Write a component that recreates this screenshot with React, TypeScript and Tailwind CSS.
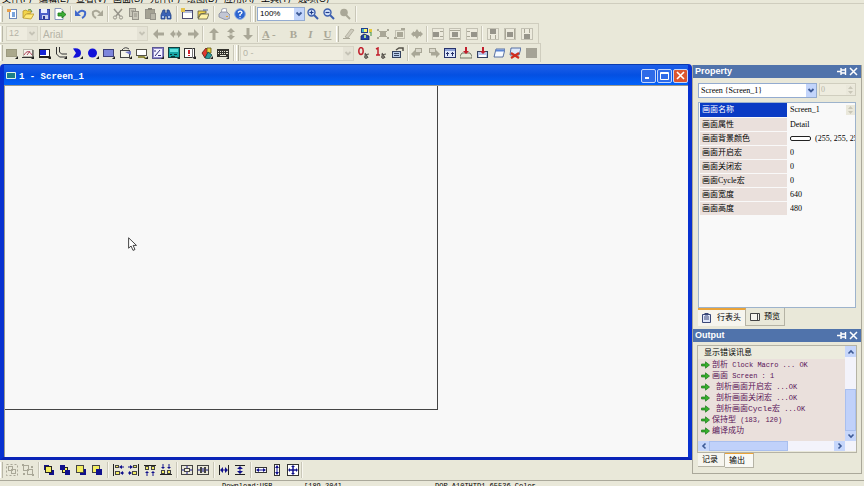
import type { ReactNode } from "react"
import clsx from "clsx"

type Tool = [string, ReactNode]

const GRAY = "#a9a797"
const NAVY = "#10108c"

const box = (x: number, y: number, w: number, h: number, fill: string, stroke?: string) => (
  <rect x={stroke ? x + 0.5 : x} y={stroke ? y + 0.5 : y} width={stroke ? w - 1 : w} height={stroke ? h - 1 : h} fill={fill} stroke={stroke} />
)
const line = (d: string, stroke = "#222", width = 1) => <path d={d} fill="none" stroke={stroke} strokeWidth={width} />
const fill = (d: string, color: string, stroke?: string) => <path d={d} fill={color} stroke={stroke} strokeWidth={0.8} />
// small mark in the corner of tools that open a flyout
const corner = fill("M12 9v3H9z", "#222")

const fileTools: Tool[] = [
  ["New", <>{box(3, 1, 8, 10, "#fff", "#7089b8")}{box(6, 4, 3, 5, "#7aa5dc")}{fill("M1 1h4v3H1z", "#e8a04a")}</>],
  ["Open", <>{fill("M1 10V3l3-1 1 1h4v2l-4 1z", "#f2d44c", "#b8952a")}{fill("M1 10l3-4h8l-3 5z", "#ffe978", "#b8952a")}{line("M6 2q3-2 4 2", "#4b8c3a")}</>],
  ["Save", <>{box(1, 1, 11, 11, "#4c5fc8", "#3240a0")}{box(3, 1, 6, 4, "#e8edff")}{box(4, 7, 6, 4, "#c9d0f0")}{box(5, 8, 2, 3, "#2a3590")}</>],
  ["Import", <>{fill("M1 .5h6l2 2v9H1z", "#fff", "#6f7fae")}{fill("M4 5h4V3l4 3.5L8 10V8H4z", "#3bad35", "#1c7a1a")}</>],
]
const undoTools: Tool[] = [
  ["Undo", <>{line("M3 5q4-4 7-1 1 4-3 6", "#4169cc", 2)}{fill("M0 2v6h6z", "#4169cc")}</>],
  ["Redo", <>{line("M9 5Q5 1 2 4q-1 4 3 6", GRAY, 2)}{fill("M12 2v6H6z", GRAY)}</>],
]
const editTools: Tool[] = [
  ["Cut", <>{line("M2 1l6 7M10 1L4 8", "#96948a", 1.5)}<circle cx="3" cy="9.5" r="1.6" fill="none" stroke="#96948a" /><circle cx="9" cy="9.5" r="1.6" fill="none" stroke="#96948a" /></>],
  ["Copy", <>{box(1, 0, 7, 9, "#c9c7ba", "#96948a")}{box(4, 3, 7, 9, "#c9c7ba", "#96948a")}{line("M6 6h3M6 8h3M3 3h3", "#96948a")}</>],
  ["Paste", <>{box(1, 1, 10, 10, "#a4a294", "#96948a")}{box(4, 0, 4, 2, "#85837a")}{box(6, 5, 6, 7, "#b9b7aa", "#96948a")}</>],
  ["Find", <>{fill("M3 2h2v3h2V2h2l2 5v4H7V8H5v3H1V7z", "#3b63b5", "#274688")}{box(2, 8, 2, 2, "#a9c3f0")}{box(8, 8, 2, 2, "#a9c3f0")}</>],
]
const screenTools: Tool[] = [
  ["New screen", <>{box(1, 2, 11, 9, "#fff", "#4c4a70")}{box(2, 3, 9, 2, "#b5bedc")}{fill("M0 0h4v4H0z", "#e4c24e")}</>],
  ["Open screen", <>{fill("M1 10V3h8v2L3 6z", "#f2d44c", "#5d5940")}{fill("M1 11l3-5h8l-2 5z", "#fff3a8", "#5d5940")}{line("M6 2h5", "#4b62a8")}</>],
]
const printTools: Tool[] = [
  ["Print", <>{fill("M3 5l1-4 4-1 1 5z", "#fff", "#8f93a5")}{fill("M1 6l2-2h6l3 3v3l-4 2-7-3z", "#c2c6d4", "#82879a")}{box(8, 8, 2, 1, "#e5a52e")}</>],
  ["Help", <><circle cx="6" cy="6" r="5.3" fill="#2d65cf" stroke="#86a8e4" />{line("M4 4.5Q6 2 8 4.200 8 5.500 6 6.500V8", "#fff", 1.3)}{box(5.5, 9, 1, 1, "#fff")}</>],
]
const lens = (color: string) => <>{line("M7 7l4 4", color, 2)}<circle cx="4.5" cy="4.5" r="3.5" fill="#d4e3fb" stroke={color} strokeWidth="1.4" /></>
const zoomTools: Tool[] = [
  ["Zoom in", <>{lens("#3c5eae")}{line("M2.500 4.500h4M4.500 2.500v4", "#203d8a", 1.2)}</>],
  ["Zoom out", <>{lens("#3c5eae")}{line("M2.500 4.500h4", "#203d8a", 1.2)}</>],
  ["Zoom", <><circle cx="5" cy="4.5" r="3.8" fill={GRAY} />{line("M7 7l4 4", GRAY, 2)}</>],
]

const left = fill("M0 6l5-5v3.500h6v3H5V11z", GRAY)
const right = fill("M12 6L7 1v3.500H1v3h6V11z", GRAY)
const hArrowTools: Tool[] = [
  ["Move left", left],
  ["Spread", <>{fill("M0 6l4-4v2.500h1.500v3H4V10z", GRAY)}{fill("M12 6L8 2v2.500H6.500v3H8V10z", GRAY)}</>],
  ["Move right", right],
]
const vArrowTools: Tool[] = [
  ["Move up", fill("M6 0l5 5H7.500v7h-3V5H1z", GRAY)],
  ["Stretch", <>{fill("M6 0l4 4H7.500v1.500h-3V4H2z", GRAY)}{fill("M6 12l4-4H7.500V6.500h-3V8H2z", GRAY)}</>],
  ["Move down", fill("M6 12l5-5H7.500V0h-3v7H1z", GRAY)],
]
const handles = <>{box(0, 1, 2, 2, GRAY)}{box(10, 1, 2, 2, GRAY)}{box(0, 9, 2, 2, GRAY)}{box(10, 9, 2, 2, GRAY)}</>
const drawTools: Tool[] = [
  ["Line color", <>{fill("M2 9l6-8 3 1-6 8z", "#cfcdbf", GRAY)}{line("M0 10.500h7", GRAY)}</>],
  ["Transform", <>{box(1, 0, 7, 5, "#49b8c4", "#1f3f90")}{box(4, 1, 3, 3, "#fff36a")}{fill("M1 12V8l3-2 5 2v4z", "#2343a5", "#15245c")}{box(4, 7, 2, 3, "#a8d890")}{line("M9 4h2v4", "#3d8d3c")}{box(9, 1, 3, 3, "#e4c83e")}</>],
  ["Fit", <>{box(3, 3, 6, 6, GRAY)}{handles}{line("M1 2l2 2M11 2L9 4M1 10l2-2M11 10L9 8", GRAY)}</>],
  ["Resize", <>{box(3, 4, 6, 5, GRAY)}{box(1, 2, 10, 9, "none", "#c3c1b3")}{box(7, 0, 4, 2, GRAY)}{box(0, 9, 3, 2, GRAY)}</>],
  ["Center", <>{box(3, 4, 6, 4, GRAY)}{fill("M0 6l3-3v6zM12 6L9 3v6zM6 1l2 3H4zM6 11l2-3H4z", GRAY)}</>],
]
const slot = (x: number, y: number) => <>{box(0, 0, 12, 12, "#eceadd", "#c3c1b3")}{box(x, y, 6, 5, "#96948a")}</>
const alignTools: Tool[] = [
  ["Snap left", <>{slot(1, 4)}{line("M8 3.500h3M8 8.500h3", GRAY)}</>],
  ["Snap center", <>{slot(3, 4)}{line("M1 2.500h10M1 10.500h10", GRAY)}</>],
  ["Snap right", <>{slot(5, 4)}{line("M1 3.500h3M1 8.500h3", GRAY)}</>],
]
const valignTools: Tool[] = [
  ["Snap top", <>{slot(3, 1)}{line("M3.500 7v4M8.500 7v4", GRAY)}</>],
  ["Snap middle", <>{slot(3, 4)}{line("M1.500 1v10M10.500 1v10", GRAY)}</>],
  ["Snap bottom", <>{slot(3, 6)}{line("M3.500 1v4M8.500 1v4", GRAY)}</>],
]

const elementTools: Tool[] = [
  ["Button", <>{box(0, 2, 11, 8, "#aaa88c", "#9c9a80")}{corner}</>],
  ["Meter", <>{box(1, 2, 10, 8, "#f5f3ee", "#b9b7aa")}{line("M2 8q4-7 8 0M5 8l3-4", "#b04a5c")}{line("M0 10.500h11V3", "#333")}{corner}</>],
  ["Bar", <>{box(0, 2, 11, 8, "#fff", "#222")}{box(1, 3, 6, 5, "#1626d8")}{line("M0 10.500h11", "#222")}{corner}</>],
  ["Pipe", <>{line("M1.500 0v7l3 3H12M4.500 0v5l2 2H12", "#333")}{corner}</>],
  ["Pie", <>{fill("M2 1.500q8-1 8 4.500t-8 4.500l3-4.500z", "#1212d8")}{corner}</>],
  ["Circle", <><circle cx="5.5" cy="6" r="4.5" fill="#1212d8" />{corner}</>],
  ["Rectangle", <>{box(0, 2, 11, 8, "#7d86dc", "#3c3f78")}{corner}</>],
  ["Input", <>{box(0, 3, 10, 8, "#f6f6ea", "#444")}{line("M2 3q3-4 7-1", "#444")}{fill("M5 5l6-1v4z", "#7076c8")}{corner}</>],
  ["Curve", <>{box(0, 2, 11, 7, "#fff", "#55534a")}{line("M2 10h6l2 2", "#777214", 1.5)}{corner}</>],
  ["Sampling", <>{box(0, 0, 12, 12, "#f4f2ff", "#5b5794")}{box(1, 1, 10, 10, "none", "#8d86c9")}{line("M3 9l5-6M3 3v2M6 8.500h3", "#302b74")}{corner}</>],
  ["Alarm", <>{box(0, 0, 12, 11, "#16a3a3", "#143e3e")}{box(2, 2, 8, 3, "#5fe0dc")}{line("M2 7.500h2M6 7.500h3M3 9.500h4", "#083838")}{corner}</>],
  ["Message", <>{box(0, 1, 11, 10, "#fff", "#333")}{line("M8.500 1v10", "#777")}{box(4, 3, 2, 4, "#d1202c")}{box(4, 8, 2, 1, "#d1202c")}{corner}</>],
  ["Graphics", <>{fill("M1 6l4-5 3 3-4 7z", "#e0382f", "#5c1a12")}{fill("M6 1h4v5H6z", "#e9d43f", "#5f5610")}{fill("M4 11l3-6 4 3-3 4z", "#2b9b9b", "#144")}{corner}</>],
  ["Keypad", <>{box(0, 2, 12, 8, "#33322d")}{line("M1 4.500h10M1 6.500h10", "#e7e5d6", 1)}{line("M2.500 3v5M4.500 3v5M6.500 3v5M8.500 3v5", "#33322d")}{line("M3 8.500h6", "#e7e5d6")}{corner}</>],
]
const key = <>{line("M6 8l5-1M7 6l3 5", "#5a564f", 1.2)}<circle cx="8" cy="10" r="1.4" fill="#8d8980" stroke="#5a564f" /></>
const stateTools: Tool[] = [
  ["State 0", <><ellipse cx="3" cy="4" rx="2.2" ry="3.4" fill="none" stroke="#c11f2c" strokeWidth="1.5" />{key}</>],
  ["State 1", <>{line("M1 2l2-1v7M1 8h4", "#c11f2c", 1.5)}{key}</>],
  ["All states", <>{box(0, 4, 9, 7, "#b9cdea", "#34425f")}{line("M2 6.500h5M2 8.500h5", "#34425f")}{line("M4 3l3-2h4v3", "#55524a", 1.5)}</>],
]
const buildTools: Tool[] = [
  ["Previous", <>{box(4, 1, 7, 5, "#dad8cb", GRAY)}{fill("M0 7l4-4v2.500h5v3H4V11z", GRAY)}</>],
  ["Next", <>{box(1, 1, 7, 5, "#dad8cb", GRAY)}{fill("M12 7L8 3v2.500H3v3h5V11z", GRAY)}</>],
  ["Compile", <>{box(0, 1, 12, 10, "#dfe8fa", "#27336c")}{box(1, 2, 10, 2, "#8fa3d8")}{line("M3.500 5v4M8.500 5v4M2 6.500h3M7 6.500h3", "#27336c")}</>],
  ["Download all", <>{fill("M0 9l2-3h8l2 3v2H0z", "#e6ebd8", "#555c4a")}{fill("M5 0h2v4h2L6 7 3 4h2z", "#c11f2c")}</>],
  ["Download", <>{box(0, 4, 11, 7, "#b8c8ea", "#34425f")}{box(2, 8, 7, 2, "#fff")}{fill("M5 0h2v4h2L6 7 3 4h2z", "#c11f2c")}</>],
  ["Simulate online", <>{fill("M1 10l2-8h9l-2 8z", "#f6faff", "#33518f")}{line("M3 3.500h8", "#5c86d4", 2)}</>],
  ["Simulate offline", <>{fill("M1 8l1-7h10l-2 7z", "#dce8fa", "#33518f")}{line("M2 6l8 5M10 6l-8 5", "#cf2d20", 2.2)}</>],
  ["Stop", box(0, 1, 11, 10, "#a5a396")],
]

const groupTools: Tool[] = [
  ["Group", <>{box(2, 2, 5, 5, "none", GRAY)}{box(5, 5, 5, 5, "none", GRAY)}<rect x=".5" y=".5" width="11" height="11" fill="none" stroke={GRAY} strokeDasharray="2 2" /></>],
  ["Ungroup", <>{box(1, 1, 6, 6, "none", GRAY)}{box(5, 5, 6, 6, "none", GRAY)}{box(0, 0, 2, 2, GRAY)}{box(10, 10, 2, 2, GRAY)}{box(9, 2, 2, 2, GRAY)}{box(1, 9, 2, 2, GRAY)}</>],
]
const orderTools: Tool[] = [
  ["Bring to front", <>{box(1, 1, 5, 5, NAVY)}{box(6, 6, 5, 5, NAVY)}{box(2, 2, 7, 7, "#f4ee62", "#222")}</>],
  ["Send to back", <>{box(3, 3, 6, 6, "#f4ee62", "#222")}{box(1, 1, 5, 5, NAVY)}{box(6, 6, 5, 5, NAVY)}</>],
  ["Bring forward", <>{box(5, 5, 6, 6, NAVY)}{box(1, 1, 8, 8, "#f4ee62", "#444")}</>],
  ["Send backward", <>{box(1, 1, 8, 8, "#f4ee62", "#444")}{box(5, 5, 6, 6, NAVY)}</>],
]
const edgeH = (
  <>{line("M1.500 0v12", "#222")}{box(3, 1, 4, 3, "#f4ee62", "#444")}{box(3, 7, 5, 4, "#f4ee62", "#444")}{fill("M7 3l3-2v4zM8 9l3-2v4z", NAVY)}{line("M9 3h3M10 9h2", NAVY)}</>
)
const edgeV = (
  <>{line("M0 1.500h12", "#222")}{box(1, 2, 4, 4, "#f4ee62", "#444")}{box(7, 2, 4, 4, "#f4ee62", "#444")}{fill("M3 7l2 2H1zM9 7l2 2H7z", NAVY)}{line("M3 8v4M9 8v4", NAVY)}</>
)
const edgeTools: Tool[] = [
  ["Align left", edgeH],
  ["Align right", <g transform="translate(12 0) scale(-1 1)">{edgeH}</g>],
  ["Align top", edgeV],
  ["Align bottom", <g transform="translate(0 12) scale(1 -1)">{edgeV}</g>],
]
const centerTools: Tool[] = [
  ["Center vertically", <>{box(0, 1, 12, 10, "none", "#444")}{line("M6 2v8M1 6h3M8 6h3", NAVY)}{box(3, 4, 6, 4, "#f1efdf", "#444")}</>],
  ["Center horizontally", <>{box(0, 1, 12, 10, "none", "#444")}{line("M1 6h2M9 6h2M6 4v4", NAVY)}{box(3, 3, 2, 6, "#f1efdf", "#444")}{box(7, 3, 2, 6, "#f1efdf", "#444")}</>],
]
const spaceH = <>{line("M1.500 1v10M10.500 1v10", "#222")}{line("M3 6h6", NAVY)}{fill("M2 6l3-3v6zM10 6L7 3v6z", NAVY)}</>
const spaceTools: Tool[] = [
  ["Space across", spaceH],
  ["Space down", <g transform="rotate(90 6 6)">{spaceH}</g>],
]
const sizeH = <>{box(0, 3, 12, 6, "#fff", "#333")}{line("M3 6h6", NAVY)}{fill("M1 6l3-2v4zM11 6L8 4v4z", NAVY)}</>
const sizeTools: Tool[] = [
  ["Same width", sizeH],
  ["Same height", <g transform="rotate(90 6 6)">{sizeH}</g>],
  ["Same size", <>{box(0, 0, 12, 12, "#fff", "#333")}{line("M3 6h6M6 3v6", NAVY, 1.5)}{fill("M1 6l2-2v4zM11 6L9 4v4zM6 1l2 2H4zM6 11l2-2H4z", NAVY)}</>],
]

const menus = ["文件(F)", "编辑(E)", "查看(V)", "画面(S)", "元件(P)", "绘图(D)", "应用(A)", "工具(T)", "选项(O)"]

const properties = [
  ["画面名称", "Screen_1"],
  ["画面属性", "Detail"],
  ["画面背景颜色", "(255, 255, 255)"],
  ["画面开启宏", "0"],
  ["画面关闭宏", "0"],
  ["画面Cycle宏", "0"],
  ["画面宽度", "640"],
  ["画面高度", "480"],
]

// indent, message, trailing text
const messages: [boolean, string, string][] = [
  [false, "剖析", " Clock Macro ... OK"],
  [false, "画面", " Screen : 1"],
  [true, "剖析画面开启宏", " ...OK"],
  [true, "剖析画面关闭宏", " ...OK"],
  [true, "剖析画面Cycle宏", " ...OK"],
  [false, "保持型", " (183, 120)"],
  [false, "编译成功", ""],
]

const serif = "font-['Liberation_Serif','Noto_Sans_CJK_SC',serif]"
const mono = "font-['Liberation_Mono','Noto_Sans_CJK_SC',monospace]"

function Tools({ items, className = "auto-cols-[16px]" }: { items: Tool[]; className?: string }) {
  return (
    <div className={clsx("grid h-full grid-flow-col items-center", className)}>
      {items.map(([label, icon]) => (
        <button key={label} aria-label={label} className="flex h-4 items-center justify-center">
          <svg viewBox="0 0 12 12" className="h-3 w-3">{icon}</svg>
        </button>
      ))}
    </div>
  )
}

function Sep({ className = "mx-0.5" }: { className?: string }) {
  return <div className={clsx("h-4 w-px shrink-0 bg-[#c9c7b8] shadow-[1px_0_#f8f7ef]", className)} />
}

function Grip() {
  return <div className="mr-px h-4 w-[3px] shrink-0 border-x border-l-white border-r-[#b9b7a8]" />
}

function Combo({ label, value, className, disabled = false }: { label: string; value: string; className: string; disabled?: boolean }) {
  return (
    <div className={clsx("relative shrink-0", className)}>
      <select
        aria-label={label}
        disabled={disabled}
        className={clsx(
          "block h-full w-full appearance-none border pl-0.5 opacity-100",
          disabled ? "border-[#d6d4c5] bg-[#eeecdf] text-[#b5b3a6]" : "border-[#93abd0] bg-white text-black"
        )}
      >
        <option>{value}</option>
      </select>
      <svg
        viewBox="0 0 10 12"
        className={clsx("pointer-events-none absolute inset-y-px right-px h-[calc(100%-2px)] w-[10px]", disabled ? "bg-[#e5e3d6]" : "bg-[#c3d5fb]")}
      >
        <path d="M2.500 4.500L5 7l2.500-2.500" fill="none" stroke={disabled ? "#c5c3b6" : "#3d5a96"} strokeWidth="1.8" />
      </svg>
    </div>
  )
}

function PanelHeader({ title }: { title: string }) {
  return (
    <div className="flex h-[13px] shrink-0 items-center bg-[#5073ab] pl-0.5 text-white">
      <h2 className="flex-1 text-[9px] leading-[13px] font-bold">{title}</h2>
      <button aria-label={`Pin ${title}`} className="mr-px">
        <svg viewBox="0 0 11 11" className="h-[11px] w-[11px]">
          <path d="M1 5.500h4M5 2v7M5 4h5M5 7h5M9.500 2v7" fill="none" stroke="#fff" strokeWidth="1.4" />
        </svg>
      </button>
      <button aria-label={`Close ${title}`} className="mr-0.5">
        <svg viewBox="0 0 11 11" className="h-[11px] w-[11px]">
          <path d="M2 2l7 7M9 2L2 9" stroke="#fff" strokeWidth="1.5" />
        </svg>
      </button>
    </div>
  )
}

function Toolbars() {
  return (
    <header className="shrink-0 pb-0.5">
      <nav className="flex h-[3px] items-end overflow-hidden pl-0.5">
        {menus.map((m) => (
          <button key={m} className="w-[37px] shrink-0 text-left text-[9px] leading-[8px]">{m}</button>
        ))}
      </nav>
      <div className="flex h-5 items-center border-t border-[#cfcdbe]">
        <Grip />
        <Tools items={fileTools} />
        <Sep />
        <Tools items={undoTools} />
        <Sep />
        <Tools items={editTools} />
        <Sep />
        <Tools items={screenTools} />
        <Sep />
        <Tools items={printTools} />
        <Sep />
        <Grip />
        <Combo label="Zoom level" value="100%" className="h-[14px] w-[48px] text-[8px]" />
        <Tools items={zoomTools} />
        <Sep />
      </div>
      <div className="flex h-5 w-[539px] items-center border-t border-r border-[#cfcdbe]">
        <Grip />
        <Combo label="Font size" value="12" disabled className="ml-0.5 h-[15px] w-8 text-[9px]" />
        <Combo label="Font" value="Arial" disabled className="mx-0.5 h-[15px] w-[108px] text-[10px]" />
        <Tools items={hArrowTools} className="auto-cols-[17px]" />
        <Sep className="mr-0.5 ml-px" />
        <Tools items={vArrowTools} className="auto-cols-[17px]" />
        <Sep className="mr-0.5 ml-px" />
        <div className={clsx("flex text-[11px] leading-4 font-bold text-[#a9a797]", serif)}>
          <button className="w-[25px] pl-0.5 text-left"><u>A</u> -</button>
          <button className="w-[17px]">B</button>
          <button className="w-[17px] italic">I</button>
          <button className="w-[17px] underline">U</button>
        </div>
        <Grip />
        <Tools items={drawTools} className="auto-cols-[17px]" />
        <Sep className="mr-0.5 ml-px" />
        <Tools items={alignTools} className="auto-cols-[17px]" />
        <Sep className="mr-0.5 ml-px" />
        <Tools items={valignTools} className="auto-cols-[17px]" />
      </div>
      <div className="flex h-[19px] w-[541px] items-center border-t border-r border-[#cfcdbe]">
        <Grip />
        <Tools items={elementTools} className="w-[227px] auto-cols-fr" />
        <Sep />
        <Grip />
        <Combo label="State" value="0 -" disabled className="mr-0.5 h-[15px] w-[114px] text-[9px]" />
        <Tools items={stateTools} className="w-[50px] auto-cols-fr" />
        <Sep className="mx-px" />
        <Tools items={buildTools} className="w-[131px] auto-cols-fr" />
      </div>
    </header>
  )
}

function ScreenWindow() {
  const control = "flex h-[14px] w-[15px] items-center justify-center rounded-[2px] border border-[#c5d6fa]"
  return (
    <section className="flex min-h-0 flex-1 flex-col rounded-t-[4px] border-x-4 border-b-3 border-x-[#0831d0] border-b-[#0a24b8] bg-[#f8f8f8]">
      <div className="flex h-[21px] shrink-0 items-center gap-px border-t border-[#0a3bb0] bg-linear-to-b from-[#1d5fe8] via-[#0450e2] to-[#0262fb] pt-px pl-0.5">
        <svg viewBox="0 0 10 8" className="h-2 w-[10px]">
          <path d="M.5.5h9v6h-9z" fill="#1b8088" stroke="#dff5e8" />
        </svg>
        <h1 className={clsx("flex-1 pt-0.5 pl-0.5 text-[9px] leading-3 font-bold text-white", mono)}>1 - Screen_1</h1>
        <button aria-label="Minimize" className={clsx(control, "bg-[#2f6be8]")}>
          <svg viewBox="0 0 9 9" className="h-[9px] w-[9px]"><path d="M1 6h4v2H1z" fill="#fff" /></svg>
        </button>
        <button aria-label="Maximize" className={clsx(control, "bg-[#2f6be8]")}>
          <svg viewBox="0 0 9 9" className="h-[9px] w-[9px]"><path d="M.5 1.500h8v7h-8zM.5 2.500h8" fill="none" stroke="#fff" /></svg>
        </button>
        <button aria-label="Close" className={clsx(control, "bg-[#dc5630]")}>
          <svg viewBox="0 0 9 9" className="h-[9px] w-[9px]"><path d="M1 1l7 7M8 1L1 8" stroke="#fff" strokeWidth="1.6" /></svg>
        </button>
      </div>
      <div className="relative min-h-0 flex-1 overflow-hidden border-t border-l border-[#9a9a90]">
        <div className="h-[324px] w-[433px] border-r border-b border-[#444]" />
        <svg viewBox="0 0 10 15" className="absolute top-[151px] left-[123px] h-[15px] w-[10px]">
          <path d="M.6.8v10.400l2.500-2.200 1.900 4.400 2-.9-1.900-4.100h3.400z" fill="#fff" stroke="#333" strokeWidth=".9" />
        </svg>
      </div>
    </section>
  )
}

function PropertyPanel() {
  return (
    <section className="flex min-h-0 flex-1 flex-col">
      <PanelHeader title="Property" />
      <div className="flex min-h-0 flex-1 flex-col px-[5px] pt-[5px]">
        <div className={clsx("flex gap-0.5 text-[8px]", serif)}>
          <Combo label="Object" value="Screen {Screen_1}" className="h-[15px] w-[119px]" />
          <div className="flex h-[13px] flex-1 items-center border border-[#d0cebf] bg-[#eeecdf]">
            <input aria-label="Index" disabled defaultValue="0" className="h-[11px] w-0 flex-1 pl-px text-[8px] leading-[11px] text-[#b5b3a6]" />
            <Spinner />
          </div>
        </div>
        <div className="mt-1 min-h-0 flex-1 overflow-hidden border border-[#9db3cc] bg-[#f9f9f9] pl-px">
          <table className={clsx("w-full table-fixed border-collapse text-left text-[8px] text-black", serif)}>
            <tbody>
              {properties.map(([name, value], i) => (
                <tr key={name} className="h-[14px] border-b border-[#f9f9f9]">
                  <th className={clsx("w-[87px] p-0 pl-0.5 leading-[13px] font-normal", i === 0 ? "bg-[#0a3bc4] text-white" : "bg-[#eae0dc]")}>
                    {name}
                  </th>
                  <td className="p-0 pl-[3px] leading-[13px]">
                    <div className="flex items-center overflow-hidden whitespace-nowrap">
                      {name === "画面背景颜色" && <span className="mr-1 h-[5px] w-[21px] shrink-0 rounded-[2px] border border-[#222] bg-white" />}
                      <span className="flex-1">{value}</span>
                      {i === 0 && <Spinner />}
                    </div>
                  </td>
                </tr>
              ))}
            </tbody>
          </table>
        </div>
        <div className="flex text-[8px] leading-4">
          <button className="flex items-center gap-1.5 border-t-2 border-r border-t-[#e9a33a] border-r-[#b5b3a5] bg-[#f6f5ee] px-1">
            <svg viewBox="0 0 9 10" className="h-[10px] w-[9px]">
              <path d="M.5 1.500h8v8h-8z" fill="#dfe7fa" stroke="#3a4878" />
              <path d="M3 0h3v2H3zM2 4h5M2 6h5" fill="#3a4878" stroke="#3a4878" />
            </svg>
            行表头
          </button>
          <button className="flex items-center gap-1 border-r border-b border-[#b5b3a5] px-1">
            <svg viewBox="0 0 10 8" className="h-2 w-[10px]">
              <path d="M.5.5h9v7h-9zM7.500 1v6" fill="#f6f5ee" stroke="#444" />
            </svg>
            预览
          </button>
        </div>
      </div>
    </section>
  )
}

function Spinner() {
  return (
    <svg viewBox="0 0 9 10" className="h-[10px] w-[9px] shrink-0">
      <path d="M0 0h9v10H0z" fill="#eae8db" />
      <path d="M4.500 1L7 4H2zM4.500 9L7 6H2z" fill="#c9c7b8" />
    </svg>
  )
}

function OutputPanel() {
  const scroll = "flex shrink-0 items-center justify-center bg-[#c6d6fb]"
  const chevron = (d: string) => (
    <svg viewBox="0 0 8 8" className="h-2 w-2"><path d={d} fill="none" stroke="#3d5a96" strokeWidth="1.6" /></svg>
  )
  return (
    <section className="flex h-[144px] shrink-0 flex-col">
      <PanelHeader title="Output" />
      <div className="flex min-h-0 flex-1 flex-col px-1 pt-[3px] pb-1">
        <div className="flex h-[108px] flex-col border border-[#b5b3a5] pb-px">
          <div className="flex min-h-0 flex-1">
            <div className="flex min-w-0 flex-1 flex-col bg-[#eae0dc]">
              <h3 className="h-[13px] shrink-0 bg-[#ecebde] pl-1.5 text-[8px] leading-[13px]">显示错误讯息</h3>
              <ul className={clsx("flex flex-col text-[#5a1458]", mono)}>
                {messages.map(([indent, text, tail]) => (
                  <li key={text} className="flex h-[11px] items-center gap-0.5 pl-[3px] whitespace-pre">
                    <svg viewBox="0 0 9 8" className="h-2 w-[9px] shrink-0">
                      <path d="M.5 3h4V.8L8.500 4 4.500 7.200V5h-4z" fill="#36b02c" stroke="#1b7a1a" strokeWidth=".7" />
                    </svg>
                    <span className={clsx("text-[8px] leading-[11px]", indent && "pl-1")}>
                      {text}
                      <span className="text-[7px]">{tail}</span>
                    </span>
                  </li>
                ))}
              </ul>
            </div>
            <div className="flex w-[11px] flex-col bg-[#f3f3fb]">
              <button aria-label="Scroll up" className={clsx(scroll, "h-[11px]")}>{chevron("M1.500 5.500L4 3l2.500 2.500")}</button>
              <div className="flex-1" />
              <div className="h-[42px] border border-[#a9bfee] bg-[#c0d1fa]" />
              <button aria-label="Scroll down" className={clsx(scroll, "h-[10px]")}>{chevron("M1.500 2.500L4 5l2.500-2.500")}</button>
            </div>
          </div>
          <div className="flex h-[10px] shrink-0 bg-[#f3f3fb] pr-[11px]">
            <button aria-label="Scroll left" className={clsx(scroll, "w-[11px]")}>{chevron("M5.500 1.500L3 4l2.500 2.500")}</button>
            <div className="w-[79px] border border-[#a9bfee] bg-[#c0d1fa]" />
            <div className="flex-1" />
            <button aria-label="Scroll right" className={clsx(scroll, "w-[11px]")}>{chevron("M2.500 1.500L5 4 2.500 6.500")}</button>
          </div>
        </div>
        <div className="flex items-start pl-px text-[8px] leading-[11px]">
          <button className="border-r border-b border-[#b5b3a5] bg-[#f6f5ee] py-px pr-1.5 pl-1">记录</button>
          <button className="border-t border-r border-b border-t-[#e9a33a] border-r-[#b5b3a5] border-b-[#b5b3a5] bg-[#f9f9f4] pt-px pr-2 pb-px pl-1">输出</button>
        </div>
      </div>
    </section>
  )
}

export default function App() {
  return (
    <div className="flex h-screen flex-col overflow-hidden bg-[#e9e8d9] font-['Liberation_Sans','Noto_Sans_CJK_SC',sans-serif] text-black">
      <Toolbars />
      <main className="flex min-h-0 flex-1">
        <div className="flex min-w-0 flex-1 flex-col">
          <ScreenWindow />
          <div className="flex h-5 shrink-0 items-center">
            <Grip />
            <Tools items={groupTools} />
            <Sep />
            <Tools items={orderTools} />
            <Sep />
            <Tools items={edgeTools} />
            <Sep />
            <Tools items={centerTools} />
            <Sep />
            <Tools items={spaceTools} />
            <Sep />
            <Tools items={sizeTools} />
            <Sep className="mx-0" />
          </div>
        </div>
        <aside className="mt-px mr-0.5 mb-1.5 flex w-[170px] shrink-0 flex-col gap-[3px] border-x border-b border-[#aaa89a]">
          <PropertyPanel />
          <OutputPanel />
        </aside>
      </main>
      <footer className={clsx("flex h-[6px] shrink-0 overflow-hidden border-t border-[#aaa89a] pt-0.5 pl-[222px] text-[7px] leading-[6px]", mono)}>
        <span className="w-[82px] shrink-0">Download:USB</span>
        <span className="w-[131px] shrink-0">[189,204]</span>
        <span className="shrink-0">DOP-A10THTD1 65536 Color</span>
      </footer>
    </div>
  )
}
